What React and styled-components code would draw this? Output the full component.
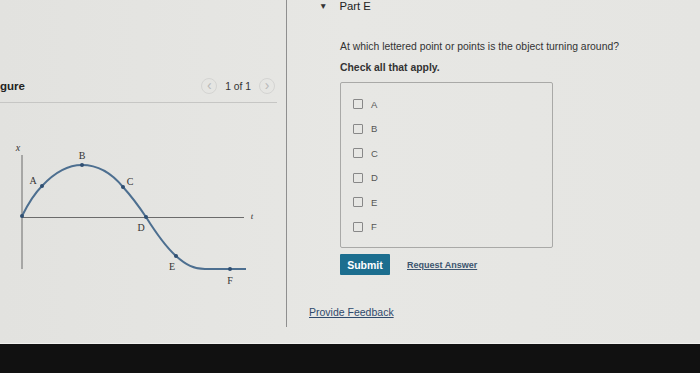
import styled, { createGlobalStyle } from "styled-components";

const GlobalStyle = createGlobalStyle`
  html, body {
    margin: 0;
    padding: 0;
    background: #121212;
    font-family: "Liberation Sans", Arial, sans-serif;
  }
`;

const options = ["A", "B", "C", "D", "E", "F"];

const App = () => {
  return (
    <Page>
      <GlobalStyle />
      <Screen>
        <FigurePanel>
          <FigureHeader>
            <FigureTitle>gure</FigureTitle>
            <Pager>
              <PageButton>&lsaquo;</PageButton>
              <PageCount>1 of 1</PageCount>
              <PageButton>&rsaquo;</PageButton>
            </Pager>
          </FigureHeader>
          <Graph />
        </FigurePanel>
        <QuestionPanel>
          <PartHeader>
            <Caret>&#9660;</Caret>
            <PartTitle>Part E</PartTitle>
          </PartHeader>
          <QuestionBody>
            <Prompt>At which lettered point or points is the object turning around?</Prompt>
            <Instruction>Check all that apply.</Instruction>
            <AnswerBox>
              {options.map((item) => (
                <Choice key={item}>
                  <Checkbox />
                  <ChoiceLabel>{item}</ChoiceLabel>
                </Choice>
              ))}
            </AnswerBox>
            <Actions>
              <SubmitButton>Submit</SubmitButton>
              <LinkText>Request Answer</LinkText>
            </Actions>
          </QuestionBody>
          <Feedback>Provide Feedback</Feedback>
        </QuestionPanel>
      </Screen>
      <Bezel />
    </Page>
  );
};

const Graph = () => (
  <GraphSvg width="270" height="160" viewBox="0 130 270 160">
    <g stroke="#6b6b6b" strokeWidth="1" fill="none">
      <line x1="22" y1="155" x2="22" y2="269" />
      <line x1="22" y1="217.5" x2="244" y2="217.5" />
    </g>
    <path
      d="M22 216 C 30 200, 38 190, 42 186 C 55 172, 68 165, 82 165 C 100 165, 114 176, 123 187 C 133 198, 140 208, 146 217 C 156 233, 166 247, 176 256 C 186 265, 194 269, 205 269 L 246 269"
      stroke="#4d6f90"
      strokeWidth="2"
      fill="none"
    />
    <g fill="#2f4f72">
      <circle cx="22" cy="216" r="2" />
      <circle cx="42" cy="186" r="2" />
      <circle cx="82" cy="165" r="2" />
      <circle cx="123" cy="187" r="2" />
      <circle cx="146" cy="217" r="2" />
      <circle cx="176" cy="256" r="2" />
      <circle cx="230" cy="269" r="2" />
    </g>
    <g
      fill="#333"
      fontFamily="'Liberation Serif', serif"
      fontSize="10"
      textAnchor="middle"
    >
      <text x="33" y="184">A</text>
      <text x="82" y="159">B</text>
      <text x="130" y="185">C</text>
      <text x="141" y="231">D</text>
      <text x="172" y="270">E</text>
      <text x="230" y="284">F</text>
      <text x="18" y="151" fontStyle="italic">x</text>
      <text x="252" y="219" fontStyle="italic" fontSize="9">t</text>
    </g>
  </GraphSvg>
);

const Page = styled.div`
  width: 700px;
  height: 373px;
  display: flex;
  flex-direction: column;
  overflow: hidden;
`;
const Screen = styled.div`
  height: 343px;
  display: flex;
  background: linear-gradient(90deg, #e2e2df 0%, #e7e7e4 50%, #e5e5e2 100%);
  border-bottom: 1px solid #f0f0ee;
`;
const Bezel = styled.div`
  flex: 1;
  background: #111;
`;
const FigurePanel = styled.div`
  width: 287px;
  height: 327px;
  border-right: 1px solid #8f8f8f;
  padding-top: 70px;
  box-sizing: border-box;
  overflow: hidden;
`;
const FigureHeader = styled.div`
  display: flex;
  align-items: center;
  justify-content: space-between;
  height: 33px;
  width: 277px;
  border-bottom: 1px solid #c6c6c4;
  box-sizing: border-box;
`;
const FigureTitle = styled.span`
  font-size: 11.5px;
  font-weight: bold;
  color: #222;
`;
const Pager = styled.div`
  display: flex;
  align-items: center;
  gap: 8px;
  margin-right: 2px;
`;
const PageButton = styled.span`
  width: 16px;
  height: 16px;
  border-radius: 50%;
  border: 1px solid #d4d4d2;
  box-sizing: border-box;
  display: flex;
  align-items: center;
  justify-content: center;
  color: #b8b8b8;
  font-size: 14px;
  line-height: 1;
  padding-bottom: 2px;
`;
const PageCount = styled.span`
  font-size: 10.3px;
  color: #333;
`;
const GraphSvg = styled.svg`
  display: block;
  margin-top: 27px;
`;
const QuestionPanel = styled.div`
  flex: 1;
  display: flex;
  flex-direction: column;
`;
const PartHeader = styled.div`
  display: flex;
  align-items: center;
  gap: 12px;
  height: 12px;
  padding-left: 32px;
`;
const Caret = styled.span`
  font-size: 8.5px;
  color: #333;
`;
const PartTitle = styled.span`
  font-size: 11.3px;
  color: #222;
`;
const QuestionBody = styled.div`
  padding-left: 53px;
  padding-top: 29px;
`;
const Prompt = styled.div`
  font-size: 10.4px;
  line-height: 12px;
  color: #333;
`;
const Instruction = styled.div`
  font-size: 10.4px;
  line-height: 12px;
  font-weight: bold;
  color: #333;
  margin-top: 9px;
`;
const AnswerBox = styled.div`
  width: 213px;
  height: 166px;
  box-sizing: border-box;
  margin-top: 8px;
  border: 1px solid #a9a9a7;
  border-radius: 2px;
  padding: 15px 0 0 12px;
  display: flex;
  flex-direction: column;
  gap: 12.5px;
`;
const Choice = styled.div`
  display: flex;
  align-items: center;
  gap: 8px;
  height: 12px;
`;
const Checkbox = styled.span`
  width: 10px;
  height: 10px;
  border: 1px solid #888;
  border-radius: 1px;
  box-sizing: border-box;
`;
const ChoiceLabel = styled.span`
  font-size: 9.5px;
  color: #555;
`;
const Actions = styled.div`
  display: flex;
  align-items: center;
  gap: 17px;
  margin-top: 6px;
`;
const SubmitButton = styled.span`
  width: 50px;
  height: 21px;
  background: #1c6e8f;
  color: #fff;
  font-size: 10.5px;
  font-weight: bold;
  display: flex;
  align-items: center;
  justify-content: center;
  border-radius: 1px;
`;
const LinkText = styled.span`
  font-size: 9px;
  font-weight: bold;
  color: #3d556f;
  text-decoration: underline;
`;
const Feedback = styled.span`
  align-self: flex-start;
  margin-top: 31px;
  margin-left: 22px;
  font-size: 10.5px;
  color: #2f4a6c;
  text-decoration: underline;
`;

export default App;
